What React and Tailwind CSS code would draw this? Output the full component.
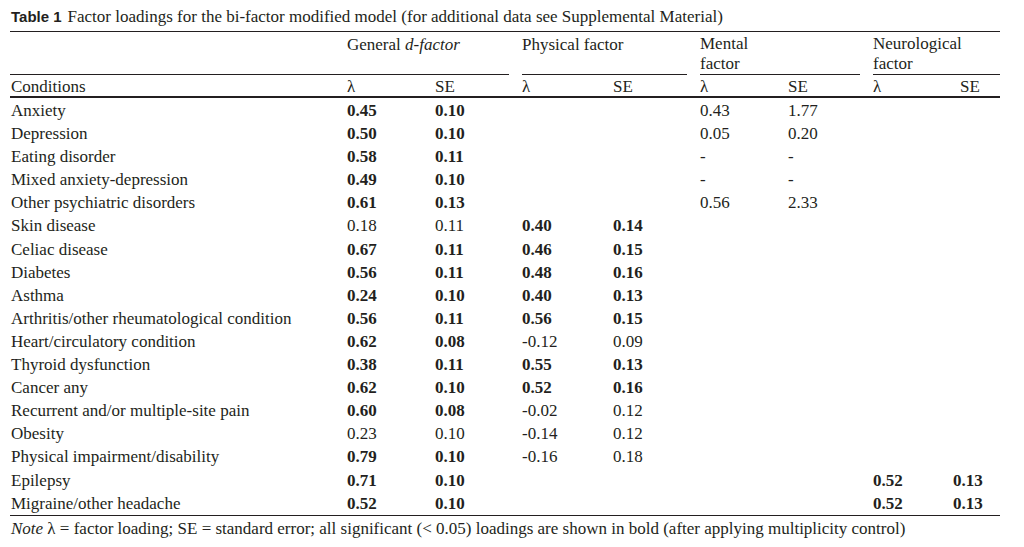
const COLS = 'grid grid-cols-[337px_88px_87px_91px_87px_88px_85px_80px_47px]';

// each row: name, then [value, bold] pairs for general, physical, mental, neurological
const ROWS = [
  ['Anxiety', ['0.45', 1], ['0.10', 1], null, null, ['0.43'], ['1.77'], null, null],
  ['Depression', ['0.50', 1], ['0.10', 1], null, null, ['0.05'], ['0.20'], null, null],
  ['Eating disorder', ['0.58', 1], ['0.11', 1], null, null, ['-'], ['-'], null, null],
  ['Mixed anxiety-depression', ['0.49', 1], ['0.10', 1], null, null, ['-'], ['-'], null, null],
  ['Other psychiatric disorders', ['0.61', 1], ['0.13', 1], null, null, ['0.56'], ['2.33'], null, null],
  ['Skin disease', ['0.18'], ['0.11'], ['0.40', 1], ['0.14', 1], null, null, null, null],
  ['Celiac disease', ['0.67', 1], ['0.11', 1], ['0.46', 1], ['0.15', 1], null, null, null, null],
  ['Diabetes', ['0.56', 1], ['0.11', 1], ['0.48', 1], ['0.16', 1], null, null, null, null],
  ['Asthma', ['0.24', 1], ['0.10', 1], ['0.40', 1], ['0.13', 1], null, null, null, null],
  ['Arthritis/other rheumatological condition', ['0.56', 1], ['0.11', 1], ['0.56', 1], ['0.15', 1], null, null, null, null],
  ['Heart/circulatory condition', ['0.62', 1], ['0.08', 1], ['-0.12'], ['0.09'], null, null, null, null],
  ['Thyroid dysfunction', ['0.38', 1], ['0.11', 1], ['0.55', 1], ['0.13', 1], null, null, null, null],
  ['Cancer any', ['0.62', 1], ['0.10', 1], ['0.52', 1], ['0.16', 1], null, null, null, null],
  ['Recurrent and/or multiple-site pain', ['0.60', 1], ['0.08', 1], ['-0.02'], ['0.12'], null, null, null, null],
  ['Obesity', ['0.23'], ['0.10'], ['-0.14'], ['0.12'], null, null, null, null],
  ['Physical impairment/disability', ['0.79', 1], ['0.10', 1], ['-0.16'], ['0.18'], null, null, null, null],
  ['Epilepsy', ['0.71', 1], ['0.10', 1], null, null, null, null, ['0.52', 1], ['0.13', 1]],
  ['Migraine/other headache', ['0.52', 1], ['0.10', 1], null, null, null, null, ['0.52', 1], ['0.13', 1]],
];

function Cell({ v }) {
  if (!v) return <div />;
  return <div className={v[1] ? 'font-bold' : ''}>{v[0]}</div>;
}

export default function App() {
  return (
    <div className="w-[1024px] h-[547px] bg-white text-[#231f20] font-['Liberation_Serif','Times_New_Roman',serif] text-[17px]">
      <div className="pl-[10px] w-[1000px]">
        {/* Caption */}
        <div className="h-[31px] pt-[7px] pl-[1px] leading-[20px] whitespace-nowrap">
          <span className="font-['Liberation_Sans',Arial,sans-serif] font-bold text-[15px] mr-[6px]">Table 1</span>
          Factor loadings for the bi-factor modified model (for additional data see Supplemental Material)
        </div>
        <div className="h-px bg-[#231f20]" />

        {/* Group headers */}
        <div className={`${COLS} h-[43px] leading-[20px]`}>
          <div className="border-b border-[#231f20]" />
          <div className="col-span-2">
            <div className="h-full border-b border-[#231f20] mr-[13px] pt-[3px]">
              General <i>d-factor</i>
            </div>
          </div>
          <div className="col-span-2">
            <div className="h-full border-b border-[#231f20] mr-[13px] pt-[3px]">Physical factor</div>
          </div>
          <div className="col-span-2">
            <div className="h-full border-b border-[#231f20] mr-[13px] pt-[2px]">Mental<br />factor</div>
          </div>
          <div className="col-span-2">
            <div className="h-full border-b border-[#231f20] pt-[2px]">Neurological<br />factor</div>
          </div>
        </div>

        {/* Column header */}
        <div className={`${COLS} h-[23px] leading-[23px] border-b-2 border-[#231f20]`}>
          <div className="pl-[1px]">Conditions</div>
          <div>λ</div>
          <div>SE</div>
          <div>λ</div>
          <div>SE</div>
          <div>λ</div>
          <div>SE</div>
          <div>λ</div>
          <div className="pl-[7px]">SE</div>
        </div>

        {/* Body */}
        <div className="pt-[1px] border-b border-[#231f20]">
          {ROWS.map(([name, ...vals]) => (
            <div key={name} className={`${COLS} h-[23.1px] leading-[23.1px] whitespace-nowrap`}>
              <div className="pl-[1px]">{name}</div>
              {vals.map((v, i) => (
                <Cell key={i} v={v} />
              ))}
            </div>
          ))}
        </div>

        {/* Note */}
        <div className="pl-[1px] pt-[3px] leading-[20px] whitespace-nowrap">
          <i>Note</i> λ = factor loading; SE = standard error; all significant (&lt; 0.05) loadings are shown in bold (after applying multiplicity control)
        </div>
      </div>
    </div>
  );
}
